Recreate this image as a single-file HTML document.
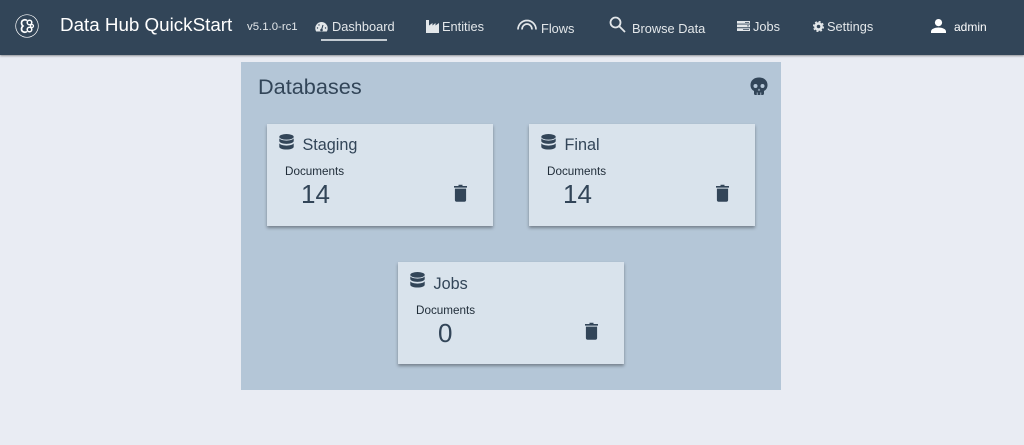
<!DOCTYPE html>
<html><head><meta charset="utf-8"><style>
html,body{margin:0;padding:0}
body{width:1024px;height:445px;overflow:hidden;background:#e9ecf3;position:relative;font-family:"Liberation Sans",sans-serif}
.a{position:absolute;white-space:nowrap;line-height:1}
svg{position:absolute;display:block}
#nav{position:absolute;left:0;top:0;width:1024px;height:55px;background:#324558;box-shadow:0 1px 2px rgba(0,0,0,.4)}
.n{color:#e3e7ea;font-size:12.800px}
#panel{position:absolute;left:241px;top:62px;width:540px;height:328px;background:#b4c6d7}
.card{position:absolute;width:226px;height:102px;background:#d9e3ec;box-shadow:0 2px 3px rgba(0,0,0,.35)}
.t{color:#324558;font-size:16.200px;left:35.500px;top:13px}
.d{color:#1f2c38;font-size:11.700px;left:18px;top:42px}
.v{color:#324558;font-size:26px;left:34px;top:57px}
</style></head><body>
<div id="nav"></div>
<svg style="left:15px;top:14px" width="24" height="24" viewBox="0 0 24 24" fill="none" stroke="#fff"><circle cx="12" cy="12" r="11.300" stroke-width=".7"/><path stroke-width="1.700" d="M12 6.500C10 5 6.500 6 6.500 9c0 1.300.6 2.300 1.500 3-.9.700-1.500 1.700-1.500 3 0 3 3.500 4 5.500 2.500"/><circle cx="14.500" cy="8.500" r="2.300" stroke-width="1.500"/><circle cx="14.500" cy="15.500" r="2.300" stroke-width="1.500"/><circle cx="17" cy="12" r="1.500" stroke-width="1.200"/></svg>
<div class="a" style="left:60px;top:16px;font-size:18.800px;color:#fff">Data Hub QuickStart</div>
<div class="a" style="left:247px;top:22px;font-size:11.400px;color:#e3e7ea">v5.1.0-rc1</div>

<svg style="left:315px;top:21px" width="13" height="12" viewBox="0 0 13 12"><path fill="#e3e7ea" d="M6.500 1A6.200 6.200 0 0 0 .3 7.200c0 1.200.3 2.300.9 3.300h10.600c.6-1 .9-2.100.9-3.300A6.200 6.200 0 0 0 6.500 1z"/><path stroke="#324558" stroke-width="1.100" d="M6.500 9L8 4"/><circle cx="6.500" cy="9" r="1.300" fill="#324558"/><g fill="#324558"><circle cx="2.500" cy="7" r=".7"/><circle cx="4" cy="4" r=".7"/><circle cx="10.500" cy="7" r=".7"/></g></svg>
<div class="a n" style="left:332px;top:21px">Dashboard</div>
<div class="a" style="left:321px;top:39px;width:66px;height:1.500px;background:#c3cbd2"></div>

<svg style="left:426px;top:20px" width="13" height="13" viewBox="0 0 13 13"><path fill="#e3e7ea" d="M0 0h3v5.500L6.500 3v2.500L9.500 3v2.500L13 3v10H0z"/></svg>
<div class="a n" style="left:442px;top:21px">Entities</div>

<svg style="left:517px;top:19px" width="20" height="11" viewBox="0 0 20 11" fill="none" stroke="#e3e7ea" stroke-width="1.700"><path d="M1 10.500A9 9 0 0 1 19 10.500"/><path d="M5 10.500A5 5.500 0 0 1 15 10.500"/></svg>
<div class="a n" style="left:541px;top:23px">Flows</div>

<svg style="left:609px;top:16px" width="17" height="17" viewBox="0 0 17 17" fill="none" stroke="#e3e7ea" stroke-width="1.800"><circle cx="6.500" cy="6.500" r="5"/><path d="M10 10l6 6"/></svg>
<div class="a n" style="left:632px;top:23px">Browse Data</div>

<svg style="left:737px;top:21px" width="13" height="10" viewBox="0 0 13 10"><path fill="#e3e7ea" d="M0 0h13v2.600H0zM0 3.500h13v2.800H0zM0 7.300h13V10H0z"/><path fill="#324558" d="M8 1h4v.7H8zM10 4.500h2v.8h-2zM6 8.300h6v.7H6z"/></svg>
<div class="a n" style="left:753px;top:21px">Jobs</div>

<svg style="left:813px;top:21px" width="11" height="11" viewBox="0 0 11 11"><circle cx="5.500" cy="5.500" r="3.100" fill="none" stroke="#e3e7ea" stroke-width="2.600"/><circle cx="5.500" cy="5.500" r="4.900" fill="none" stroke="#e3e7ea" stroke-width="1.300" stroke-dasharray="2 1.850"/></svg>
<div class="a n" style="left:827px;top:21px">Settings</div>

<svg style="left:931px;top:19px" width="15" height="14" viewBox="0 0 15 14"><circle cx="7.500" cy="3.600" r="3.600" fill="#fff"/><path fill="#fff" d="M0 14v-1.500C0 10 3.800 8.500 7.500 8.500s7.500 1.500 7.500 4V14z"/></svg>
<div class="a" style="left:954px;top:21px;font-size:12px;color:#fff">admin</div>

<div id="panel">
<div class="a" style="left:17px;top:14px;font-size:21.700px;color:#324558">Databases</div>
<svg style="left:509px;top:15px" width="18" height="20" viewBox="0 0 18 20"><path fill="#324558" d="M9 .5C4 .5.500 3.500.500 8c0 2.800 1.300 4.900 3.500 6v2.500c0 .8.500 1.500 1.200 1.500h7.600c.7 0 1.200-.7 1.200-1.500V14c2.200-1.100 3.500-3.200 3.500-6C17.500 3.500 14 .5 9 .5z"/><circle cx="5.500" cy="9" r="2" fill="#b4c6d7"/><circle cx="12.500" cy="9" r="2" fill="#b4c6d7"/><path fill="#b4c6d7" d="M9 11.500l1.200 2H7.800zM6.800 15.500h.8V18h-.8zM10.400 15.500h.8V18h-.8z"/></svg>

<div class="card" style="left:26px;top:62px">
<svg style="left:12px;top:10px" width="15" height="16" viewBox="0 0 15 17" preserveAspectRatio="none"><g fill="#324558"><ellipse cx="7.500" cy="3" rx="7.200" ry="3"/><path d="M.3 4.700C1.500 6.300 4.500 7 7.500 7s6-.7 7.200-2.300v2.800C14.700 9.200 11.500 10.500 7.500 10.500S.3 9.200.3 7.500z"/><path d="M.3 10C1.500 11.600 4.500 12.300 7.500 12.300s6-.7 7.200-2.300v3.500c0 1.800-3.200 3-7.200 3s-7.200-1.200-7.200-3z"/></g></svg>
<div class="a t">Staging</div><div class="a d">Documents</div><div class="a v">14</div>
<svg style="left:187px;top:60px" width="13" height="18" viewBox="0 0 13 18"><path fill="#324558" d="M0 2h4.500V.8h4V2H13v1.600H0zM.9 4.600h11.200V16c0 1-.7 1.800-1.700 1.800H2.600C1.600 17.800.9 17 .9 16z"/></svg>
</div>

<div class="card" style="left:288px;top:62px">
<svg style="left:12px;top:10px" width="15" height="16" viewBox="0 0 15 17" preserveAspectRatio="none"><g fill="#324558"><ellipse cx="7.500" cy="3" rx="7.200" ry="3"/><path d="M.3 4.700C1.500 6.300 4.500 7 7.500 7s6-.7 7.200-2.300v2.800C14.700 9.200 11.500 10.500 7.500 10.500S.3 9.200.3 7.500z"/><path d="M.3 10C1.500 11.600 4.500 12.300 7.500 12.300s6-.7 7.200-2.300v3.500c0 1.800-3.200 3-7.200 3s-7.200-1.200-7.200-3z"/></g></svg>
<div class="a t">Final</div><div class="a d">Documents</div><div class="a v">14</div>
<svg style="left:187px;top:60px" width="13" height="18" viewBox="0 0 13 18"><path fill="#324558" d="M0 2h4.500V.8h4V2H13v1.600H0zM.9 4.600h11.200V16c0 1-.7 1.800-1.700 1.800H2.600C1.600 17.800.9 17 .9 16z"/></svg>
</div>

<div class="card" style="left:157px;top:200px">
<svg style="left:12px;top:10px" width="15" height="16" viewBox="0 0 15 17" preserveAspectRatio="none"><g fill="#324558"><ellipse cx="7.500" cy="3" rx="7.200" ry="3"/><path d="M.3 4.700C1.500 6.300 4.500 7 7.500 7s6-.7 7.200-2.300v2.800C14.700 9.200 11.500 10.500 7.500 10.500S.3 9.200.3 7.500z"/><path d="M.3 10C1.500 11.600 4.500 12.300 7.500 12.300s6-.7 7.200-2.300v3.500c0 1.800-3.200 3-7.200 3s-7.200-1.200-7.200-3z"/></g></svg>
<div class="a t" style="top:14px">Jobs</div><div class="a d" style="top:43px">Documents</div><div class="a v" style="left:40px;top:58px">0</div>
<svg style="left:187px;top:60px" width="13" height="18" viewBox="0 0 13 18"><path fill="#324558" d="M0 2h4.500V.8h4V2H13v1.600H0zM.9 4.600h11.200V16c0 1-.7 1.800-1.700 1.800H2.600C1.600 17.800.9 17 .9 16z"/></svg>
</div>
</div>
</body></html>
